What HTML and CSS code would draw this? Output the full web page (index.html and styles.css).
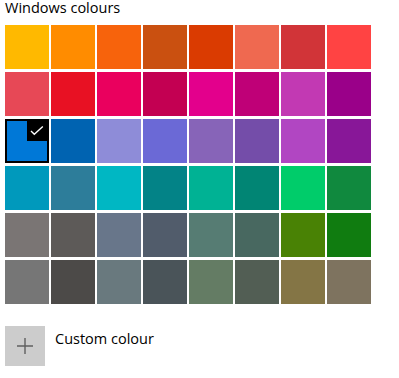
FILE: index.html
```html
<!DOCTYPE html>
<html lang="en">
<head>
    <meta charset="UTF-8">
    <title>Windows colours</title>
    <link rel="stylesheet" href="styles.css">
</head>
<body>
    <div class="section-title">Windows colours</div>

    <div class="swatch-grid">
        <!-- row 1 -->
        <div class="swatch" style="background-color: #FFB900;"></div>
        <div class="swatch" style="background-color: #FF8C00;"></div>
        <div class="swatch" style="background-color: #F7630C;"></div>
        <div class="swatch" style="background-color: #CA5010;"></div>
        <div class="swatch" style="background-color: #DA3B01;"></div>
        <div class="swatch" style="background-color: #EF6950;"></div>
        <div class="swatch" style="background-color: #D13438;"></div>
        <div class="swatch" style="background-color: #FF4343;"></div>
        <!-- row 2 -->
        <div class="swatch" style="background-color: #E74856;"></div>
        <div class="swatch" style="background-color: #E81123;"></div>
        <div class="swatch" style="background-color: #EA005E;"></div>
        <div class="swatch" style="background-color: #C30052;"></div>
        <div class="swatch" style="background-color: #E3008C;"></div>
        <div class="swatch" style="background-color: #BF0077;"></div>
        <div class="swatch" style="background-color: #C239B3;"></div>
        <div class="swatch" style="background-color: #9A0089;"></div>
        <!-- row 3 -->
        <div class="swatch selected" style="background-color: #0078D7;">
            <span class="check-badge">
                <svg width="20" height="20" viewBox="0 0 20 20">
                    <path d="M4 10 L7.3 13.2 L15.8 5.6" fill="none" stroke="#fff" stroke-width="1.4"/>
                </svg>
            </span>
        </div>
        <div class="swatch" style="background-color: #0063B1;"></div>
        <div class="swatch" style="background-color: #8E8CD8;"></div>
        <div class="swatch" style="background-color: #6B69D6;"></div>
        <div class="swatch" style="background-color: #8764B8;"></div>
        <div class="swatch" style="background-color: #744DA9;"></div>
        <div class="swatch" style="background-color: #B146C2;"></div>
        <div class="swatch" style="background-color: #881798;"></div>
        <!-- row 4 -->
        <div class="swatch" style="background-color: #0099BC;"></div>
        <div class="swatch" style="background-color: #2D7D9A;"></div>
        <div class="swatch" style="background-color: #00B7C3;"></div>
        <div class="swatch" style="background-color: #038387;"></div>
        <div class="swatch" style="background-color: #00B294;"></div>
        <div class="swatch" style="background-color: #018574;"></div>
        <div class="swatch" style="background-color: #00CC6A;"></div>
        <div class="swatch" style="background-color: #10893E;"></div>
        <!-- row 5 -->
        <div class="swatch" style="background-color: #7A7574;"></div>
        <div class="swatch" style="background-color: #5D5A58;"></div>
        <div class="swatch" style="background-color: #68768A;"></div>
        <div class="swatch" style="background-color: #515C6B;"></div>
        <div class="swatch" style="background-color: #567C73;"></div>
        <div class="swatch" style="background-color: #486860;"></div>
        <div class="swatch" style="background-color: #498205;"></div>
        <div class="swatch" style="background-color: #107C10;"></div>
        <!-- row 6 -->
        <div class="swatch" style="background-color: #767676;"></div>
        <div class="swatch" style="background-color: #4C4A48;"></div>
        <div class="swatch" style="background-color: #69797E;"></div>
        <div class="swatch" style="background-color: #4A5459;"></div>
        <div class="swatch" style="background-color: #647C64;"></div>
        <div class="swatch" style="background-color: #525E54;"></div>
        <div class="swatch" style="background-color: #847545;"></div>
        <div class="swatch" style="background-color: #7E735F;"></div>
    </div>

    <div class="custom-colour">
        <div class="plus-box">
            <svg width="16" height="16" viewBox="0 0 16 16">
                <path d="M8 0 V16 M0 8 H16" stroke="#5f5f5f" stroke-width="1.4"/>
            </svg>
        </div>
        <span class="custom-label">Custom colour</span>
    </div>
</body>
</html>
```

FILE: styles.css
```css
body {
    font-family: 'Open Sans', 'Noto Sans', sans-serif;
    background-color: #ffffff;
    color: #000;
    margin: 0;
    padding: 0 5px;
}
.section-title {
    font-size: 14.5px;
    line-height: 16px;
    height: 25px;
}
.swatch-grid {
    display: grid;
    grid-template-columns: repeat(8, 44px);
    grid-auto-rows: 44px;
    column-gap: 2px;
    row-gap: 3px;
}
.swatch {
    position: relative;
}
.swatch.selected {
    box-shadow: inset 0 0 0 2px #000;
}
.check-badge { /* black corner with tick */
    position: absolute;
    top: 2px;
    right: 2px;
    width: 20px;
    height: 20px;
    background-color: #000;
}
.check-badge svg {
    display: block;
}
.custom-colour {
    display: flex;
    align-items: flex-start;
    margin-top: 22px;
}
.plus-box {
    width: 40px;
    height: 40px;
    background-color: #cccccc;
    display: flex;
    justify-content: center;
    align-items: center;
}
.custom-label {
    font-size: 14.5px;
    margin-left: 10px;
    margin-top: 3px;
}
```
